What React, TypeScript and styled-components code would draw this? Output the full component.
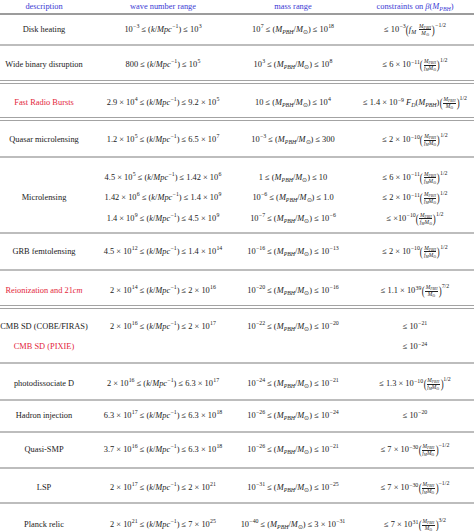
import { ReactNode } from "react";
import styled, { createGlobalStyle } from "styled-components";

const GlobalStyle = createGlobalStyle`
  html, body {
    margin: 0;
    padding: 0;
    background: #fff;
    overflow: hidden;
  }
  body {
    font-family: "Liberation Serif", "Times New Roman", serif;
    color: #222;
  }
`;

const Table = styled.div`
  width: 482px;
  font-size: 8.4px;
`;

type Rule = "single" | "double" | "head" | "none";

const Row = styled.div<{ $h: number; $pt?: number; $rule: Rule }>`
  display: grid;
  grid-template-columns: 88px 150px 110px 134px;
  box-sizing: border-box;
  height: ${(p) => p.$h}px;
  padding-top: ${(p) => p.$pt ?? 0}px;
  border-bottom: ${(p) =>
    p.$rule === "double"
      ? "4px double #a3a3a3"
      : p.$rule === "head"
      ? "2px solid #9c9c9c"
      : p.$rule === "none"
      ? "0"
      : "2px solid #bdbdbd"};
`;

const Cell = styled.div`
  display: flex;
  flex-direction: column;
  align-items: center;
  justify-content: center;
  gap: 8.5px;
  white-space: nowrap;
  min-width: 0;
`;

const Line = styled.div`
  height: 12px;
  line-height: 12px;
`;

const Head = styled.span`
  color: #3a3ad4;
`;

const Red = styled.span`
  color: #e3263b;
`;

const I = styled.i`
  font-style: italic;
`;

const Sup = styled.sup`
  font-size: 0.7em;
  line-height: 0;
  vertical-align: 0.6em;
  margin-left: 0.3px;
`;

const Sub = styled.sub`
  font-size: 0.7em;
  line-height: 0;
  vertical-align: -0.3em;
`;

const Frac = styled.span`
  display: inline-flex;
  flex-direction: column;
  align-items: center;
  vertical-align: middle;
  font-size: 5.4px;
  line-height: 5.6px;
  margin: 0 0.5px;
`;

const Num = styled.span`
  padding: 0 0.5px 0.4px;
  border-bottom: 0.6px solid currentColor;
`;

const Den = styled.span`
  padding-top: 0.4px;
`;

const Paren = styled.span`
  display: inline-block;
  font-size: 12.5px;
  line-height: 0;
  vertical-align: -1.6px;
  transform: scaleX(0.7);
  margin: 0 -0.5px;
`;

const Exp = styled.sup`
  font-size: 5.9px;
  line-height: 0;
  vertical-align: 5px;
`;

const Pbh = () => (
  <>
    <I>M</I>
    <Sub>
      <I>PBH</I>
    </Sub>
  </>
);

const Sun = () => (
  <>
    <I>M</I>
    <Sub>⊙</Sub>
  </>
);

const Fm = () => (
  <>
    <I>f</I>
    <Sub>
      <I>M</I>
    </Sub>
  </>
);

const Ten = ({ e, c }: { e: string; c?: string }) => (
  <>
    {c && `${c} × `}10<Sup>{e}</Sup>
  </>
);

const K = ({ lo, hi }: { lo: ReactNode; hi: ReactNode }) => (
  <>
    {lo} ≤ (<I>k</I>/<I>Mpc</I>
    <Sup>−1</Sup>) ≤ {hi}
  </>
);

const Mass = ({ lo, hi }: { lo: ReactNode; hi: ReactNode }) => (
  <>
    {lo} ≤ (<Pbh />/<Sun />) ≤ {hi}
  </>
);

type Shape = "fOut" | "fIn" | "sun" | "fd";

const Le = ({
  children,
  shape,
  exp,
}: {
  children: ReactNode;
  shape?: Shape;
  exp?: string;
}) => (
  <>
    ≤ {children}
    {shape === "fd" && (
      <>
        {" "}
        <I>F</I>
        <Sub>
          <I>D</I>
        </Sub>
        (<Pbh />)
      </>
    )}
    {shape && (
      <>
        <Paren>(</Paren>
        {shape === "fOut" && (
          <>
            <Fm />{" "}
          </>
        )}
        <Frac>
          <Num>
            <Pbh />
          </Num>
          <Den>
            {shape === "fIn" && <Fm />}
            <Sun />
          </Den>
        </Frac>
        <Paren>)</Paren>
        <Exp>{exp}</Exp>
      </>
    )}
  </>
);

interface Spec {
  h: number;
  pt: number;
  rule: Rule;
  name: ReactNode[];
  k: ReactNode[];
  m: ReactNode[];
  c: ReactNode[];
}

const rows: Spec[] = [
  {
    h: 31,
    pt: 0,
    rule: "single",
    name: ["Disk heating"],
    k: [<K lo={<Ten e="−3" />} hi={<Ten e="3" />} />],
    m: [<Mass lo={<Ten e="7" />} hi={<Ten e="18" />} />],
    c: [
      <Le shape="fOut" exp="−1/2">
        <Ten e="−3" />
      </Le>,
    ],
  },
  {
    h: 38,
    pt: 4,
    rule: "double",
    name: ["Wide binary disruption"],
    k: [<K lo="800" hi={<Ten e="5" />} />],
    m: [<Mass lo={<Ten e="3" />} hi={<Ten e="8" />} />],
    c: [
      <Le shape="fIn" exp="1/2">
        <Ten c="6" e="−11" />
      </Le>,
    ],
  },
  {
    h: 37,
    pt: 5,
    rule: "double",
    name: [<Red>Fast Radio Bursts</Red>],
    k: [<K lo={<Ten c="2.9" e="4" />} hi={<Ten c="9.2" e="5" />} />],
    m: [<Mass lo="10" hi={<Ten e="4" />} />],
    c: [
      <Le shape="fd" exp="1/2">
        <Ten c="1.4" e="−9" />
      </Le>,
    ],
  },
  {
    h: 37,
    pt: 3,
    rule: "single",
    name: ["Quasar microlensing"],
    k: [<K lo={<Ten c="1.2" e="5" />} hi={<Ten c="6.5" e="7" />} />],
    m: [<Mass lo={<Ten e="−3" />} hi="300" />],
    c: [
      <Le shape="fIn" exp="1/2">
        <Ten c="2" e="−10" />
      </Le>,
    ],
  },
  {
    h: 76,
    pt: 6,
    rule: "single",
    name: ["Microlensing"],
    k: [
      <K lo={<Ten c="4.5" e="5" />} hi={<Ten c="1.42" e="6" />} />,
      <K lo={<Ten c="1.42" e="6" />} hi={<Ten c="1.4" e="9" />} />,
      <K lo={<Ten c="1.4" e="9" />} hi={<Ten c="4.5" e="9" />} />,
    ],
    m: [
      <Mass lo="1" hi="10" />,
      <Mass lo={<Ten e="−6" />} hi="1.0" />,
      <Mass lo={<Ten e="−7" />} hi={<Ten e="−6" />} />,
    ],
    c: [
      <Le shape="fIn" exp="1/2">
        <Ten c="6" e="−11" />
      </Le>,
      <Le shape="fIn" exp="1/2">
        <Ten c="2" e="−11" />
      </Le>,
      <Le shape="fIn" exp="1/2">
        ×10<Sup>−10</Sup>
      </Le>,
    ],
  },
  {
    h: 37,
    pt: 0,
    rule: "single",
    name: ["GRB femtolensing"],
    k: [<K lo={<Ten c="4.5" e="12" />} hi={<Ten c="1.4" e="14" />} />],
    m: [<Mass lo={<Ten e="−16" />} hi={<Ten e="−13" />} />],
    c: [
      <Le shape="fIn" exp="1/2">
        <Ten c="2" e="−10" />
      </Le>,
    ],
  },
  {
    h: 38,
    pt: 6,
    rule: "double",
    name: [
      <Red>
        Reionization and 21<I>cm</I>
      </Red>,
    ],
    k: [<K lo={<Ten c="2" e="14" />} hi={<Ten c="2" e="16" />} />],
    m: [<Mass lo={<Ten e="−20" />} hi={<Ten e="−16" />} />],
    c: [
      <Le shape="sun" exp="7/2">
        <Ten c="1.1" e="39" />
      </Le>,
    ],
  },
  {
    h: 55,
    pt: 3,
    rule: "single",
    name: ["CMB SD (COBE/FIRAS)", <Red>CMB SD (PIXIE)</Red>],
    k: [<K lo={<Ten c="2" e="16" />} hi={<Ten c="2" e="17" />} />, null],
    m: [<Mass lo={<Ten e="−22" />} hi={<Ten e="−20" />} />, null],
    c: [
      <Le>
        <Ten e="−21" />
      </Le>,
      <Le>
        <Ten e="−24" />
      </Le>,
    ],
  },
  {
    h: 37,
    pt: 5,
    rule: "single",
    name: ["photodissociate D"],
    k: [<K lo={<Ten c="2" e="16" />} hi={<Ten c="6.3" e="17" />} />],
    m: [<Mass lo={<Ten e="−24" />} hi={<Ten e="−21" />} />],
    c: [
      <Le shape="fIn" exp="1/2">
        <Ten c="1.3" e="−10" />
      </Le>,
    ],
  },
  {
    h: 32,
    pt: 0,
    rule: "single",
    name: ["Hadron injection"],
    k: [<K lo={<Ten c="6.3" e="17" />} hi={<Ten c="6.3" e="18" />} />],
    m: [<Mass lo={<Ten e="−26" />} hi={<Ten e="−24" />} />],
    c: [
      <Le>
        <Ten e="−20" />
      </Le>,
    ],
  },
  {
    h: 36,
    pt: 0,
    rule: "single",
    name: ["Quasi-SMP"],
    k: [<K lo={<Ten c="3.7" e="16" />} hi={<Ten c="6.3" e="18" />} />],
    m: [<Mass lo={<Ten e="−26" />} hi={<Ten e="−21" />} />],
    c: [
      <Le shape="fIn" exp="−1/2">
        <Ten c="7" e="−30" />
      </Le>,
    ],
  },
  {
    h: 35,
    pt: 5,
    rule: "single",
    name: ["LSP"],
    k: [<K lo={<Ten c="2" e="17" />} hi={<Ten c="2" e="21" />} />],
    m: [<Mass lo={<Ten e="−31" />} hi={<Ten e="−25" />} />],
    c: [
      <Le shape="fIn" exp="−1/2">
        <Ten c="7" e="−30" />
      </Le>,
    ],
  },
  {
    h: 40,
    pt: 2,
    rule: "none",
    name: ["Planck relic"],
    k: [<K lo={<Ten c="2" e="21" />} hi={<Ten c="7" e="25" />} />],
    m: [<Mass lo={<Ten e="−40" />} hi={<Ten c="3" e="−31" />} />],
    c: [
      <Le shape="sun" exp="3/2">
        <Ten c="7" e="31" />
      </Le>,
    ],
  },
];

const Column = ({ lines }: { lines: ReactNode[] }) => (
  <Cell>
    {lines.map((l, i) => (
      <Line key={i}>{l}</Line>
    ))}
  </Cell>
);

export default function App() {
  return (
    <>
      <GlobalStyle />
      <Table>
        <Row $h={15} $rule="head">
          <Cell>
            <Head>description</Head>
          </Cell>
          <Cell>
            <Head>wave number range</Head>
          </Cell>
          <Cell>
            <Head>mass range</Head>
          </Cell>
          <Cell>
            <Head>
              constraints on <I>β</I>(<Pbh />)
            </Head>
          </Cell>
        </Row>
        {rows.map((r, i) => (
          <Row key={i} $h={r.h} $pt={r.pt} $rule={r.rule}>
            <Column lines={r.name} />
            <Column lines={r.k} />
            <Column lines={r.m} />
            <Column lines={r.c} />
          </Row>
        ))}
      </Table>
    </>
  );
}
